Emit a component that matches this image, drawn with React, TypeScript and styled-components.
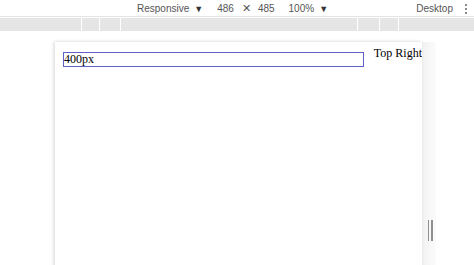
import styled, { createGlobalStyle } from 'styled-components';

const Global = createGlobalStyle`
  html, body {
    margin: 0;
    padding: 0;
    background: #fff;
    overflow: hidden;
  }
`;

const Shell = styled.div`
  width: 474px;
  height: 265px;
  overflow: hidden;
  display: flex;
  flex-direction: column;
  font-family: 'Liberation Sans', Arial, sans-serif;
`;

const Toolbar = styled.div`
  flex-shrink: 0;
  height: 16px;
  border-bottom: 1px solid #e4e4e4;
  display: flex;
  align-items: center;
  font-size: 10px;
  color: #555;
`;

const Center = styled.div`
  display: flex;
  align-items: center;
  margin-left: 137px;
  padding-top: 1px;
`;

const Caret = styled.span`
  font-size: 9px;
  margin-left: 5px;
  color: #333;
`;

const Dim = styled.span<{ $gap?: number }>`
  margin-left: ${({ $gap }) => $gap ?? 0}px;
`;

const Times = styled.span`
  margin-left: 8px;
  font-size: 11px;
  color: #555;
`;

const Right = styled.div`
  margin-left: auto;
  padding-top: 1px;
  display: flex;
  align-items: center;
`;

const Kebab = styled.span`
  margin-left: 12px;
  margin-right: 7px;
  display: flex;
  flex-direction: column;
  gap: 2px;
  span {
    width: 2px;
    height: 2px;
    border-radius: 1px;
    background: #666;
  }
`;

const Ruler = styled.div`
  flex-shrink: 0;
  margin-top: 1px;
  height: 13px;
  display: flex;
  gap: 1px;
`;

const Segment = styled.div<{ $w?: number }>`
  background: #e5e5e5;
  ${({ $w }) => ($w ? `width: ${$w}px;` : 'flex: 1;')}
`;

const Stage = styled.div`
  flex: 1;
  min-height: 0;
  display: flex;
  align-items: flex-start;
  padding-top: 11px;
  padding-left: 55px;
`;

const Frame = styled.div`
  flex-shrink: 0;
  width: 367px;
  height: 366px;
  background: #fff;
  box-shadow: -2px 0 3px rgba(0, 0, 0, 0.1), 0 -1px 3px rgba(0, 0, 0, 0.06);
  padding: 4px 0 0 8px;
  box-sizing: border-box;
  display: flex;
  align-items: flex-start;
  font-family: 'Liberation Serif', 'Times New Roman', serif;
  font-size: 12px;
  color: #000;
`;

const Field = styled.input`
  margin-top: 6px;
  width: 301px;
  height: 15px;
  box-sizing: border-box;
  border: 1px solid #5f5fc8;
  padding: 0;
  font-family: 'Liberation Serif', 'Times New Roman', serif;
  font-size: 12px;
  color: #000;
  background: #fff;
  outline: none;
`;

const Label = styled.span`
  margin-left: auto;
  line-height: 14px;
  white-space: nowrap;
`;

const HandleStrip = styled.div`
  flex-shrink: 0;
  width: 14px;
  height: 366px;
  padding: 10px 0 0 2px;
  background: linear-gradient(to right, #ececec 0px, #f4f4f4 3px, #fbfbfb 14px);
  display: flex;
  align-items: center;
  justify-content: center;
  gap: 2px;
  box-sizing: border-box;
`;

const Grip = styled.div`
  width: 1.5px;
  height: 21px;
  background: #8f8f8f;
`;

export default function App() {
  return (
    <>
      <Global />
      <Shell>
        <Toolbar>
          <Center>
            <span>Responsive</span>
            <Caret>▼</Caret>
            <Dim $gap={14}>486</Dim>
            <Times>✕</Times>
            <Dim $gap={7}>485</Dim>
            <Dim $gap={14}>100%</Dim>
            <Caret>▼</Caret>
          </Center>
          <Right>
            <span>Desktop</span>
            <Kebab>
              <span />
              <span />
              <span />
            </Kebab>
          </Right>
        </Toolbar>
        <Ruler>
          <Segment $w={81} />
          <Segment $w={17} />
          <Segment $w={20} />
          <Segment $w={236} />
          <Segment $w={21} />
          <Segment $w={18} />
          <Segment />
        </Ruler>
        <Stage>
          <Frame>
            <Field readOnly value="400px" />
            <Label>Top Right</Label>
          </Frame>
          <HandleStrip>
            <Grip />
            <Grip />
          </HandleStrip>
        </Stage>
      </Shell>
    </>
  );
}
